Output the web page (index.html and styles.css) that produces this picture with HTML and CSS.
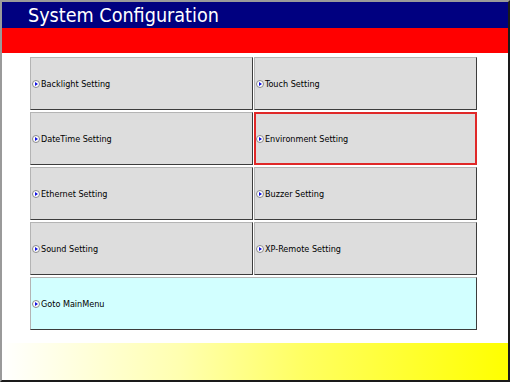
FILE: index.html
```html
<!DOCTYPE html>
<html>
<head>
<meta charset="utf-8">
<link rel="stylesheet" href="styles.css">
</head>
<body>
<div class="window">
  <div class="title">System Configuration</div>
  <div class="redbar"></div>
  <div class="grid">
    <div class="btn"><span class="ico"></span>Backlight Setting</div>
    <div class="btn"><span class="ico"></span>Touch Setting</div>
    <div class="btn"><span class="ico"></span>DateTime Setting</div>
    <div class="btn focus"><span class="ico"></span>Environment Setting</div>
    <div class="btn"><span class="ico"></span>Ethernet Setting</div>
    <div class="btn"><span class="ico"></span>Buzzer Setting</div>
    <div class="btn"><span class="ico"></span>Sound Setting</div>
    <div class="btn"><span class="ico"></span>XP-Remote Setting</div>
    <div class="btn wide"><span class="ico"></span>Goto MainMenu</div>
  </div>
  <div class="footer"></div>
</div>
</body>
</html>
```
FILE: styles.css
```css
html, body { margin: 0; padding: 0; background: #fff; }
body { width: 516px; height: 382px; overflow: hidden; }
.window {
  box-sizing: border-box;
  width: 510px; height: 382px;
  border-top: 2px solid #9a9a9a;
  border-left: 2px solid #9a9a9a;
  border-right: 2px solid #1a1a1a;
  border-bottom: 2px solid #1a1a1a;
  display: flex; flex-direction: column;
  background: #fff;
}
.title {
  height: 26px; background: #000080; color: #fff;
  font-family: "DejaVu Sans Condensed", "DejaVu Sans", sans-serif; font-size: 19.6px;
  line-height: 27px; padding-left: 26px; box-sizing: border-box;
}
.redbar { height: 25px; background: #ff0000; }
.grid {
  margin: 4px 0 0 28px; width: 447px;
  display: grid; grid-template-columns: 223px 223px; column-gap: 1px;
  grid-auto-rows: 53px; row-gap: 2px;
}
.btn {
  box-sizing: border-box;
  background: #dddddd;
  border-top: 1px solid #b4b4b4; border-left: 1px solid #b4b4b4;
  border-right: 1px solid #3c3c3c; border-bottom: 1px solid #3c3c3c;
  display: flex; align-items: center; padding-left: 1px;
  font-family: "DejaVu Sans Condensed", "DejaVu Sans", sans-serif; font-size: 9px;
  color: #000;
}
.btn.focus { border: 2px solid #e02828; padding-left: 0; }
.btn.wide { grid-column: 1 / span 2; background: #d2ffff; }
.ico {
  box-sizing: border-box; width: 8px; height: 8px; border-radius: 50%;
  border: 1px solid #8a8a8a; background: #fff; margin-right: 1px;
  position: relative; flex: none;
}
.ico::after {
  content: ""; position: absolute; left: 2px; top: 1px;
  border-left: 3px solid #1010e0; border-top: 2px solid transparent; border-bottom: 2px solid transparent;
}
.footer {
  margin-top: auto; height: 37px;
  background: linear-gradient(to right, #ffffff 0%, #ffffb0 35%, #ffff60 60%, #ffff00 100%);
}
```
